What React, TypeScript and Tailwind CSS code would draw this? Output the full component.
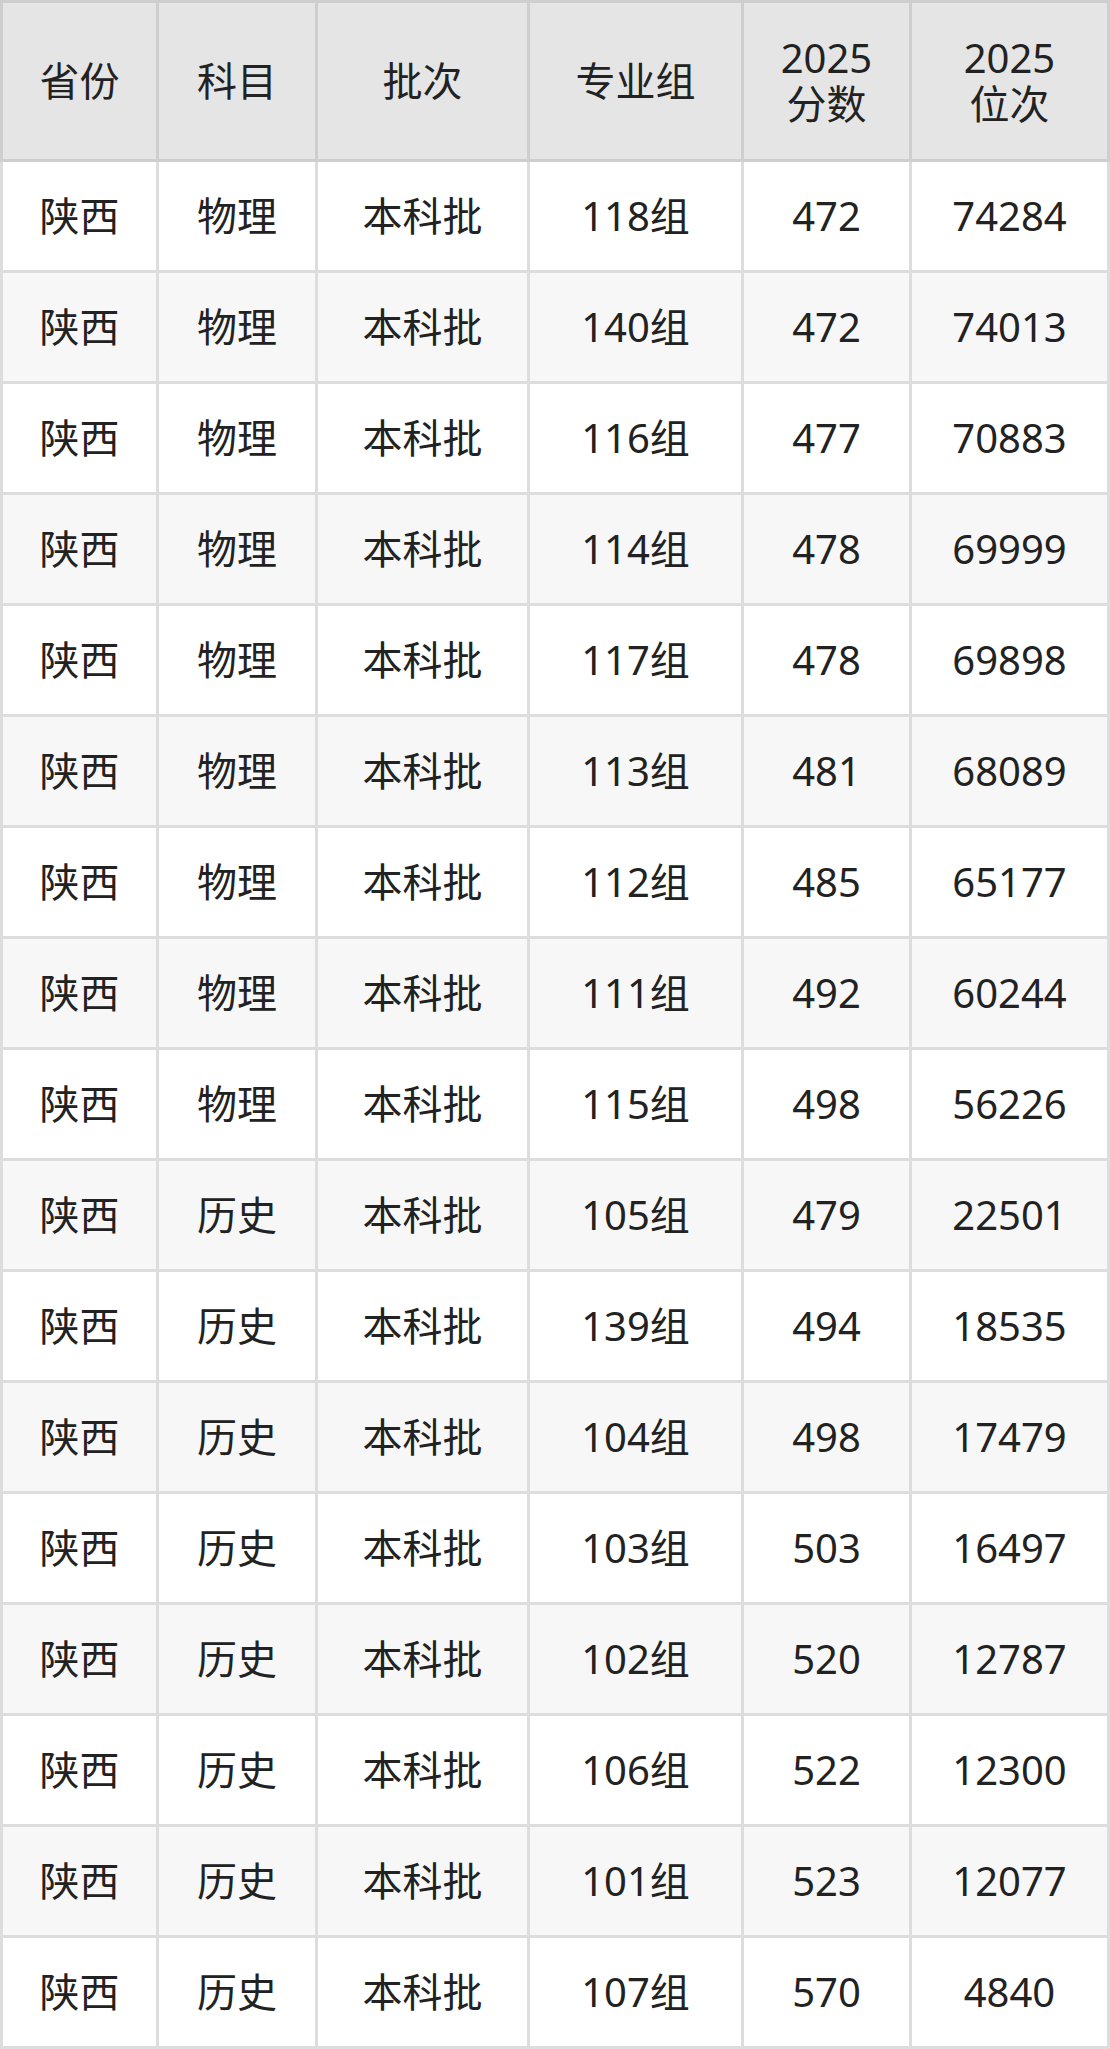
const rows: [string, string, string, string][] = [
  ['物理', '118组', '472', '74284'],
  ['物理', '140组', '472', '74013'],
  ['物理', '116组', '477', '70883'],
  ['物理', '114组', '478', '69999'],
  ['物理', '117组', '478', '69898'],
  ['物理', '113组', '481', '68089'],
  ['物理', '112组', '485', '65177'],
  ['物理', '111组', '492', '60244'],
  ['物理', '115组', '498', '56226'],
  ['历史', '105组', '479', '22501'],
  ['历史', '139组', '494', '18535'],
  ['历史', '104组', '498', '17479'],
  ['历史', '103组', '503', '16497'],
  ['历史', '102组', '520', '12787'],
  ['历史', '106组', '522', '12300'],
  ['历史', '101组', '523', '12077'],
  ['历史', '107组', '570', '4840'],
];

const cols = 'grid grid-cols-[153px_156px_209px_211px_165px_195px] gap-x-[3px]';

function TwoLine({ top, bottom }: { top: string; bottom: string }) {
  return (
    <div className="flex h-[156px] flex-col items-center justify-center bg-[#e5e5e5]">
      <div className="h-[46px] leading-[46px]">{top}</div>
      <div className="h-[46px] leading-[46px]">{bottom}</div>
    </div>
  );
}

export default function App() {
  return (
    <div
      className="w-[1110px] text-[40px] leading-[1.2] text-[#222222]"
      style={{ fontFamily: '"Noto Sans", "Noto Sans CJK SC", sans-serif' }}
    >
      <div className={`${cols} bg-[#cecece] p-[3px]`}>
        {['省份', '科目', '批次', '专业组'].map((h) => (
          <div key={h} className="flex h-[156px] items-center justify-center bg-[#e5e5e5]">
            {h}
          </div>
        ))}
        <TwoLine top="2025" bottom="分数" />
        <TwoLine top="2025" bottom="位次" />
      </div>
      <div className={`${cols} gap-y-[3px] bg-[#dddddd] px-[3px] pb-[3px]`}>
        {rows.map(([subject, group, score, rank], i) => {
          const bg = i % 2 === 0 ? 'bg-white' : 'bg-[#f7f7f7]';
          return ['陕西', subject, '本科批', group, score, rank].map((v, j) => (
            <div key={`${i}-${j}`} className={`flex h-[108px] items-center justify-center ${bg}`}>
              {v}
            </div>
          ));
        })}
      </div>
    </div>
  );
}
